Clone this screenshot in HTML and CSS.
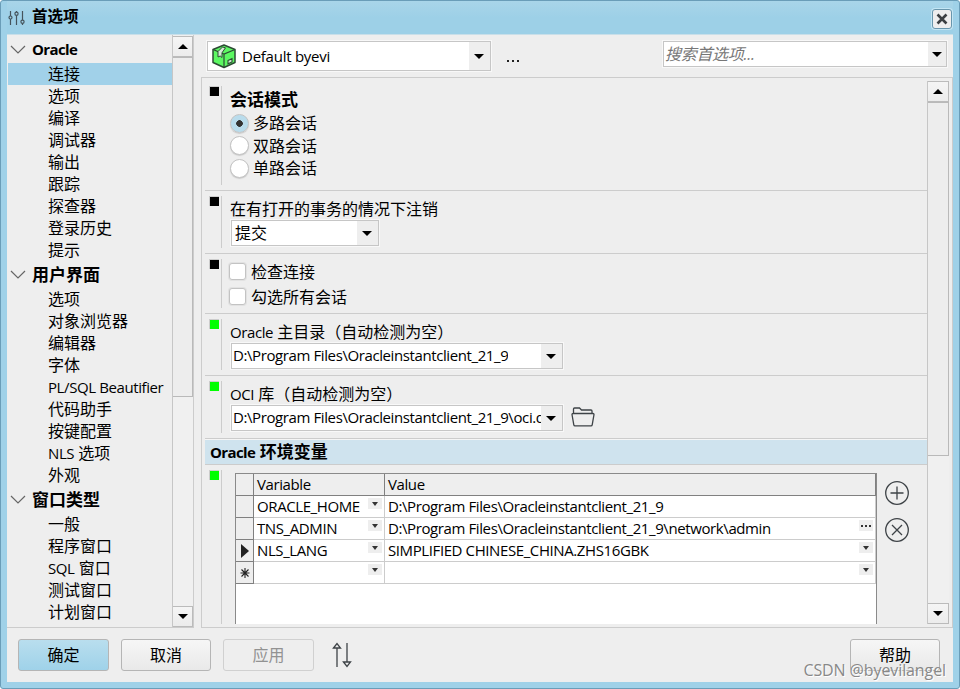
FILE: index.html
```html
<!DOCTYPE html>
<html lang="zh-CN">
<head>
    <meta charset="UTF-8">
    <meta name="viewport" content="width=device-width, initial-scale=1.0">
    <title>首选项</title>
    <link rel="stylesheet" href="styles.css">
</head>

<body>
<div class="window">
    <div class="titlebar">
        <svg class="sliders" width="17" height="16" viewBox="0 0 17 16">
            <g fill="none" stroke="#45545c" stroke-width="1.2">
                <path d="M2.500 1v5M2.500 9v6M8.500 1v1M8.500 5.500v9.500M14.500 1v9M14.500 13.500v1.500"/>
                <circle cx="2.500" cy="7.500" r="1.500"/>
                <circle cx="8.500" cy="3.700" r="1.600"/>
                <circle cx="14.500" cy="11.700" r="1.600"/>
            </g>
        </svg>
        <h1>首选项</h1>
        <button class="close">
            <svg width="12" height="12" viewBox="0 0 12 12"><path d="M1.500 1.500l9 9M10.500 1.500l-9 9" stroke="#3c4043" stroke-width="2.600"/></svg>
        </button>
    </div>

    <div class="client">
        <div class="main">
            <div class="sidebar">
                <div class="tree">
                    <h2><svg width="16" height="10" viewBox="0 0 16 10"><path d="M1 1l7 7l7-7"/></svg><span class="en">Oracle</span></h2>
                    <ul>
                        <li class="selected">连接</li>
                        <li>选项</li>
                        <li>编译</li>
                        <li>调试器</li>
                        <li>输出</li>
                        <li>跟踪</li>
                        <li>探查器</li>
                        <li>登录历史</li>
                        <li>提示</li>
                    </ul>
                    <h2><svg width="16" height="10" viewBox="0 0 16 10"><path d="M1 1l7 7l7-7"/></svg>用户界面</h2>
                    <ul>
                        <li>选项</li>
                        <li>对象浏览器</li>
                        <li>编辑器</li>
                        <li>字体</li>
                        <li><span class="en">PL/SQL Beautifier</span></li>
                        <li>代码助手</li>
                        <li>按键配置</li>
                        <li><span class="en">NLS</span> 选项</li>
                        <li>外观</li>
                    </ul>
                    <h2><svg width="16" height="10" viewBox="0 0 16 10"><path d="M1 1l7 7l7-7"/></svg>窗口类型</h2>
                    <ul>
                        <li>一般</li>
                        <li>程序窗口</li>
                        <li><span class="en">SQL</span> 窗口</li>
                        <li>测试窗口</li>
                        <li>计划窗口</li>
                    </ul>
                </div>
                <div class="scrollbar">
                    <div class="sb-btn"><i class="up"></i></div>
                    <div class="thumb tree-thumb"></div>
                    <div class="track"></div>
                    <div class="sb-btn"><i class="down"></i></div>
                </div>
            </div>

            <div class="content">
                <div class="toolbar">
                    <div class="combo profile">
                        <svg class="box" width="26" height="26" viewBox="0 0 26 26">
                            <path d="M2 6.500L13 2l11 4.500v13L13 24.500L2 19.500z" fill="#5cf862" stroke="#2c4a34" stroke-width="1.500" stroke-linejoin="round"/>
                            <path d="M2 6.500l11 4.500l11-4.500M13 11v13.500" fill="none" stroke="#2c4a34" stroke-width="1.200"/>
                            <path d="M7 8.500l4.500-4.500l3 .8l-3.500 5v4.700l-1.800-1.500l-2.200 1z" fill="#d4ead6" stroke="#2c4a34" stroke-width="1"/>
                            <path d="M17 17.500l4-1.800v3.300l-4 1.800z" fill="#d4ead6" stroke="#2c4a34" stroke-width="1.100"/>
                        </svg>
                        <span class="en">Default byevi</span>
                        <b class="arrow"><i class="down"></i></b>
                    </div>
                    <div class="more"><i></i><i></i><i></i></div>
                    <div class="combo search">
                        <em>搜索首选项...</em>
                        <b class="arrow"><i class="down"></i></b>
                    </div>
                </div>

                <div class="pane">
                    <div class="options">
                        <div class="section mode">
                            <div class="marker"></div>
                            <div class="fields">
                                <h3>会话模式</h3>
                                <div class="radio"><span class="dot on"></span>多路会话</div>
                                <div class="radio"><span class="dot"></span>双路会话</div>
                                <div class="radio"><span class="dot"></span>单路会话</div>
                            </div>
                        </div>
                        <div class="section logoff">
                            <div class="marker"></div>
                            <div class="fields">
                                <label>在有打开的事务的情况下注销</label>
                                <div class="combo commit">提交<b class="arrow"><i class="down"></i></b></div>
                            </div>
                        </div>
                        <div class="section checks">
                            <div class="marker"></div>
                            <div class="fields">
                                <div class="check"><span class="tick"></span>检查连接</div>
                                <div class="check"><span class="tick"></span>勾选所有会话</div>
                            </div>
                        </div>
                        <div class="section home">
                            <div class="marker green"></div>
                            <div class="fields">
                                <label><span class="en">Oracle</span> 主目录（自动检测为空）</label>
                                <div class="combo path"><span class="en">D:\Program Files\Oracleinstantclient_21_9</span><b class="arrow"><i class="down"></i></b></div>
                            </div>
                        </div>
                        <div class="section oci">
                            <div class="marker green"></div>
                            <div class="fields">
                                <label><span class="en">OCI</span> 库（自动检测为空）</label>
                                <div class="line">
                                    <div class="combo path"><span class="en">D:\Program Files\Oracleinstantclient_21_9\oci.d</span><b class="arrow"><i class="down"></i></b></div>
                                    <svg width="24" height="20" viewBox="0 0 24 20"><path d="M2.500 6.500V2q0-1 1-1h5l2 2h9.500q1 0 1 1v2.500M1 7.500q0-1 1-1h20q1 0 1 1l-1.800 10.300q-.2 1-1.200 1H4q-1 0-1.200-1z" fill="none" stroke="#3e4347" stroke-width="1.300"/></svg>
                                </div>
                            </div>
                        </div>
                        <h3 class="band"><span class="en">Oracle</span> 环境变量</h3>
                        <div class="section env">
                            <div class="marker green"></div>
                            <div class="grid">
                                <div class="row head">
                                    <div class="ind"></div>
                                    <div class="name en">Variable</div>
                                    <div class="value en">Value</div>
                                </div>
                                <div class="row">
                                    <div class="ind"></div>
                                    <div class="name en">ORACLE_HOME<b><i class="down"></i></b></div>
                                    <div class="value en">D:\Program Files\Oracleinstantclient_21_9</div>
                                </div>
                                <div class="row">
                                    <div class="ind"></div>
                                    <div class="name en">TNS_ADMIN<b><i class="down"></i></b></div>
                                    <div class="value en">D:\Program Files\Oracleinstantclient_21_9\network\admin<b><u></u><u></u><u></u></b></div>
                                </div>
                                <div class="row">
                                    <div class="ind"><i class="current"></i></div>
                                    <div class="name en">NLS_LANG<b><i class="down"></i></b></div>
                                    <div class="value en">SIMPLIFIED CHINESE_CHINA.ZHS16GBK<b><i class="down"></i></b></div>
                                </div>
                                <div class="row">
                                    <div class="ind"><svg width="10" height="10" viewBox="0 0 10 10"><path d="M5 0v10M1.500 1.500l7 7M8.500 1.500l-7 7M.5 5h9" stroke="#222" stroke-width="1.100"/></svg></div>
                                    <div class="name"><b><i class="down"></i></b></div>
                                    <div class="value"><b><i class="down"></i></b></div>
                                </div>
                            </div>
                            <div class="actions">
                                <svg width="26" height="26" viewBox="0 0 26 26"><circle cx="13" cy="13" r="11.300"/><path d="M13 6.500v13M6.500 13h13"/></svg>
                                <svg width="26" height="26" viewBox="0 0 26 26"><circle cx="13" cy="13" r="11.300"/><path d="M8 8l10 10M18 8l-10 10"/></svg>
                            </div>
                        </div>
                    </div>
                    <div class="scrollbar">
                        <div class="sb-btn"><i class="up"></i></div>
                        <div class="thumb pane-thumb"></div>
                        <div class="track"></div>
                        <div class="sb-btn"><i class="down"></i></div>
                    </div>
                </div>
            </div>
        </div>

        <div class="footer">
            <button class="btn primary">确定</button>
            <button class="btn">取消</button>
            <button class="btn off">应用</button>
            <svg width="20" height="26" viewBox="0 0 20 26"><path d="M5 6v19M1.500 6L5 1.500L8.500 6zM15 1v19M11.500 20l3.500 4.500l3.500-4.500z" fill="none" stroke="#3e4347" stroke-width="1.300"/></svg>
            <button class="btn help">帮助</button>
        </div>
    </div>
    <div class="watermark">CSDN @byevilangel</div>
</div>
</body>
</html>
```

FILE: styles.css
```css
* {
    box-sizing: border-box;
}

body {
    margin: 0;
    font: 16px/22px "Open Sans", "Noto Sans CJK SC", sans-serif;
    color: #000;
    overflow: hidden;
}

h1, h2, h3, ul {
    margin: 0;
    padding: 0;
    list-style: none;
}

.en {
    font-size: 15px;
    letter-spacing: -0.4px;
}

.window {
    position: relative;
    width: 960px;
    height: 689px;
    padding: 0 6px 6px;
    border: 1px solid #6a9db8;
    border-radius: 3px;
    background: #9fd1e8;
    display: flex;
    flex-direction: column;
}

.titlebar {
    height: 33px;
    display: flex;
    align-items: center;
    flex-shrink: 0;
    background: linear-gradient(#a9d5e9, #9dd0e7 50%);
}

.titlebar h1 {
    font-size: 15.5px;
    line-height: 30px;
    margin: -3px 0 0 7px;
}

.sliders {
    margin-left: 1px;
}

.close {
    width: 20px;
    height: 20px;
    margin: 2px 1px 0 auto;
    padding: 0;
    border: 1px solid #6896ad;
    border-radius: 3px;
    background: #eee;
    box-shadow: 0 0 0 1px #c4e6f4;
    display: flex;
    align-items: center;
    justify-content: center;
}

.client {
    flex: 1;
    min-height: 0;
    background: #eee;
    border-top: 1px solid #c9dfe9;
    display: flex;
    flex-direction: column;
}

.main {
    height: 593px;
    display: flex;
    gap: 7px;
}

/* left tree */
.sidebar {
    width: 187px;
    display: flex;
    border-right: 1px solid #ccc;
    border-bottom: 1px solid #ccc;
}

.tree {
    flex: 1;
    padding: 1px 0 0 1px;
    white-space: nowrap;
}

.tree h2 {
    height: 27px;
    line-height: 27px;
    font-size: 17px;
    display: flex;
    align-items: center;
}

.tree h2 .en, .band .en {
    font-size: 15px;
    letter-spacing: -0.6px;
}

.tree h2 svg {
    margin: 0 6px 0 2px;
    fill: none;
    stroke: #666;
    stroke-width: 1.2;
}

.tree li {
    height: 22px;
    line-height: 22px;
    padding-left: 40px;
}

.tree li.selected {
    background: #a1d1e9;
}

.scrollbar {
    width: 21px;
    display: flex;
    flex-direction: column;
    background: #f0f0f0;
    border-left: 1px solid #c6c6c6;
}

.sidebar .scrollbar {
    padding-top: 1px;
    height: 592px;
}

.sb-btn {
    height: 21px;
    border: 1px solid #bbb;
    border-left: 0;
    background: linear-gradient(#f5f5f5, #ececec);
    display: flex;
    align-items: center;
    justify-content: center;
    flex-shrink: 0;
}

.thumb {
    border: 1px solid #b9b9b9;
    border-left: 0;
    background: #ededed;
}

.tree-thumb {
    height: 340px;
}

.pane-thumb {
    height: 354px;
}

.track {
    flex: 1;
}

.up, .down {
    width: 0;
    height: 0;
    border: 5px solid transparent;
}

.up {
    border-top: 0;
    border-bottom-color: #000;
}

.down {
    border-bottom: 0;
    border-top-color: #000;
}

/* right side */
.content {
    flex: 1;
    min-width: 0;
}

.toolbar {
    height: 42px;
    display: flex;
    padding: 6px 6px 0;
}

.combo {
    height: 26px;
    display: flex;
    align-items: center;
    background: #fff;
    border: 1px solid #c6c6c6;
    box-shadow: 0 0 0 1px #f8f8f8;
    padding-left: 3px;
    overflow: hidden;
    white-space: nowrap;
}

.combo .arrow {
    width: 21px;
    height: 100%;
    margin-left: auto;
    padding-right: 1px;
    background: #eee;
    display: flex;
    align-items: center;
    justify-content: center;
    flex-shrink: 0;
}

.profile {
    width: 284px;
    height: 30px;
}

.profile .box {
    margin-right: 5px;
}

.profile .en {
    letter-spacing: -0.25px;
}

.more {
    display: flex;
    gap: 3px;
    margin: 19px 0 0 16px;
}

.more i {
    width: 2px;
    height: 2px;
    background: #222;
}

.search {
    width: 284px;
    margin-left: auto;
    padding-left: 1px;
    color: #777;
}

.search em {
    letter-spacing: -0.3px;
}

.search .arrow {
    width: 18px;
    padding: 0;
}

.pane {
    height: 551px;
    border: 1px solid #ccc;
    padding: 3px;
    display: flex;
}

.options {
    flex: 1;
    min-width: 0;
    overflow: hidden;
}

.pane .scrollbar {
    width: 22px;
}

.section {
    display: flex;
    padding: 5px 0 5px 4px;
    border-bottom: 1px solid #ccc;
}

.marker {
    width: 13px;
    border-right: 1px solid #ccc;
    flex-shrink: 0;
}

.marker::before {
    content: "";
    display: block;
    width: 9px;
    height: 9px;
    border: 1px solid #ccc;
    border-width: 1px 0 0 1px;
    background: #000;
    background-clip: padding-box;
}

.marker.green::before {
    background-color: #0f0;
}

.fields {
    padding-left: 8px;
}

.mode {
    height: 110px;
}

.mode h3 {
    font-size: 17px;
    line-height: 24px;
    margin-top: 2px;
}

.radio {
    display: flex;
    align-items: center;
    gap: 4px;
    height: 22.5px;
}

.dot {
    width: 19px;
    height: 19px;
    border: 1px solid #c3c3c3;
    border-radius: 50%;
    background: #fff;
    box-shadow: 0 1px 1px #ccc;
}

.dot.on {
    background: radial-gradient(circle, #333 0 3px, #b9dcec 3.6px);
}

.logoff {
    height: 63px;
}

.section label {
    display: block;
    height: 23px;
    line-height: 24px;
}

.logoff .fields, .home .fields, .oci .fields {
    margin-top: 1px;
}

.commit {
    width: 148px;
    margin-left: 1px;
}

.checks {
    height: 60px;
}

.checks .fields {
    padding-left: 7px;
}

.check {
    display: flex;
    align-items: center;
    gap: 5px;
    height: 25px;
}

.tick {
    width: 17px;
    height: 17px;
    border: 1px solid #c3c3c3;
    border-radius: 3px;
    background: #fff;
    box-shadow: 0 0 0 1px #e2e2e2;
}

.home {
    height: 62px;
}

.oci {
    height: 63px;
}

.path {
    width: 332px;
    padding-left: 1px;
    margin-left: 1px;
    line-height: 20px;
}

.path .en {
    overflow: hidden;
    margin-top: -2px;
}

.line {
    display: flex;
    align-items: center;
    gap: 8px;
}

.line svg {
    margin-top: -2px;
}

.band {
    height: 26px;
    border-top: 1px solid #f5f5f5;
    border-bottom: 1px solid #ccc;
    background: #cfe3ee;
    font-size: 17px;
    line-height: 24px;
    padding-left: 5px;
}

.env {
    height: 160px;
    border: 0;
    padding-bottom: 0;
}

/* variables grid */
.grid {
    width: 642px;
    margin: 3px 7px 0 13px;
    border: 1px solid #8a8a8a;
    border-bottom: 0;
    background: #fff;
}

.row {
    height: 22px;
    display: flex;
}

.row > div {
    display: flex;
    border-right: 1px solid #ccc;
    border-bottom: 1px solid #ccc;
    padding-left: 3px;
    line-height: 20px;
    white-space: nowrap;
}

.row .ind {
    width: 18px;
    padding: 0;
    align-items: center;
    justify-content: center;
    background: #eee;
    border-color: #808080;
}

.row .name {
    width: 131px;
}

.row .value {
    flex: 1;
}

.row.head > div {
    background: #eee;
    border-color: #808080;
}

.row b {
    width: 14px;
    height: 11px;
    margin: 2px 2px 0 auto;
    background: #eee;
    display: flex;
    align-items: center;
    justify-content: center;
}

.row b .down {
    border-width: 4px 3px 0;
    border-top-color: #333;
}

.row b u {
    width: 2px;
    height: 2px;
    margin: 0 1px;
    background: #333;
}

.current {
    border: 7px solid transparent;
    border-left: 8px solid #222;
    border-right: 0;
}

.actions {
    display: flex;
    flex-direction: column;
    gap: 11px;
    padding-top: 10px;
}

.actions svg {
    fill: none;
    stroke: #3e4347;
    stroke-width: 1.3;
}

/* bottom buttons */
.footer {
    display: flex;
    padding: 11px 13px 0 11px;
}

.btn {
    width: 90px;
    height: 32px;
    margin-right: 12px;
    padding: 0;
    font: inherit;
    border: 1px solid #b5b5b5;
    border-radius: 3px;
    background: linear-gradient(#f6f6f6, #e9e9e9);
}

.btn.primary {
    width: 91px;
    background: linear-gradient(#b9deee, #9fd2e9);
}

.btn.off {
    width: 91px;
    color: #929292;
    border-color: #d0d0d0;
    background: #eee;
}

.footer svg {
    margin: 3px 0 0 6px;
}

.btn.help {
    margin: 0 0 0 auto;
}

.watermark {
    position: absolute;
    right: 13px;
    bottom: 6px;
    font: 16px/24px "Open Sans", sans-serif;
    letter-spacing: -0.1px;
    color: #888;
    text-shadow: 1px 1px 0 #fff;
}
```
